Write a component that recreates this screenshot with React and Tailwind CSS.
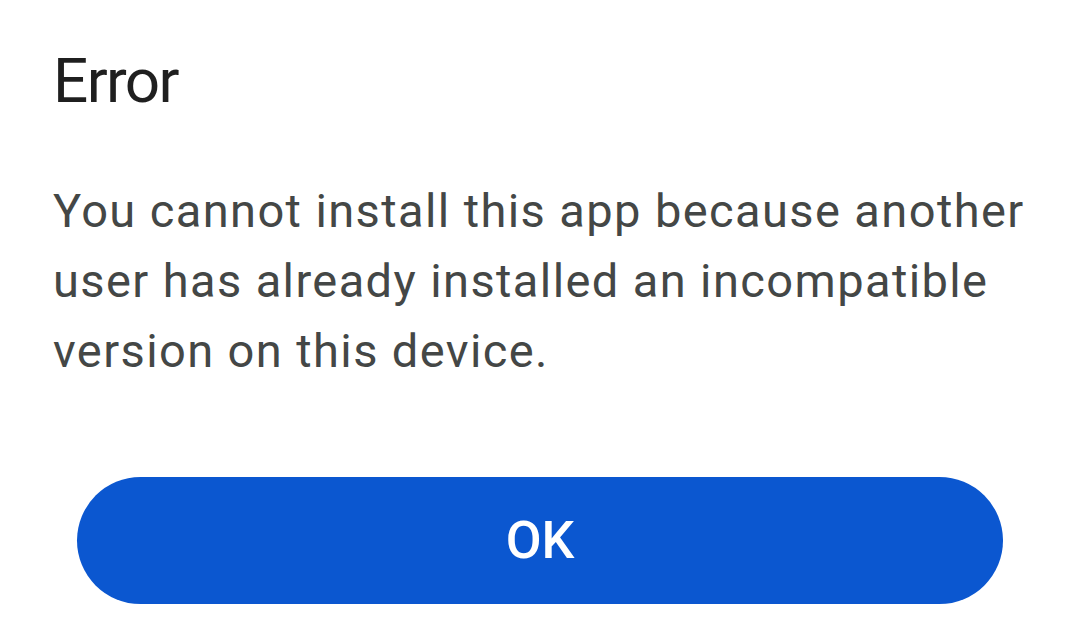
export default function App() {
  return (
    <div
      className="w-[1080px] h-[642px] bg-white overflow-hidden"
      style={{ fontFamily: 'Roboto, "Noto Sans", sans-serif' }}
    >
      <div className="pt-[44px] px-[53px]">
        <h1 className="text-[62px] leading-[73px] font-normal tracking-[-1.6px] text-[#1f1f1f]">
          Error
        </h1>
        <p className="mt-[59px] text-[47px] leading-[70px] tracking-[1.4px] text-[#444746]">
          You cannot install this app because another user has already installed an incompatible version on this device.
        </p>
      </div>
      <div className="mt-[91px] px-[77px]">
        <button className="w-full h-[127px] rounded-full bg-[#0b57d0] text-white text-[52px] font-medium flex items-center justify-center">
          OK
        </button>
      </div>
    </div>
  )
}
